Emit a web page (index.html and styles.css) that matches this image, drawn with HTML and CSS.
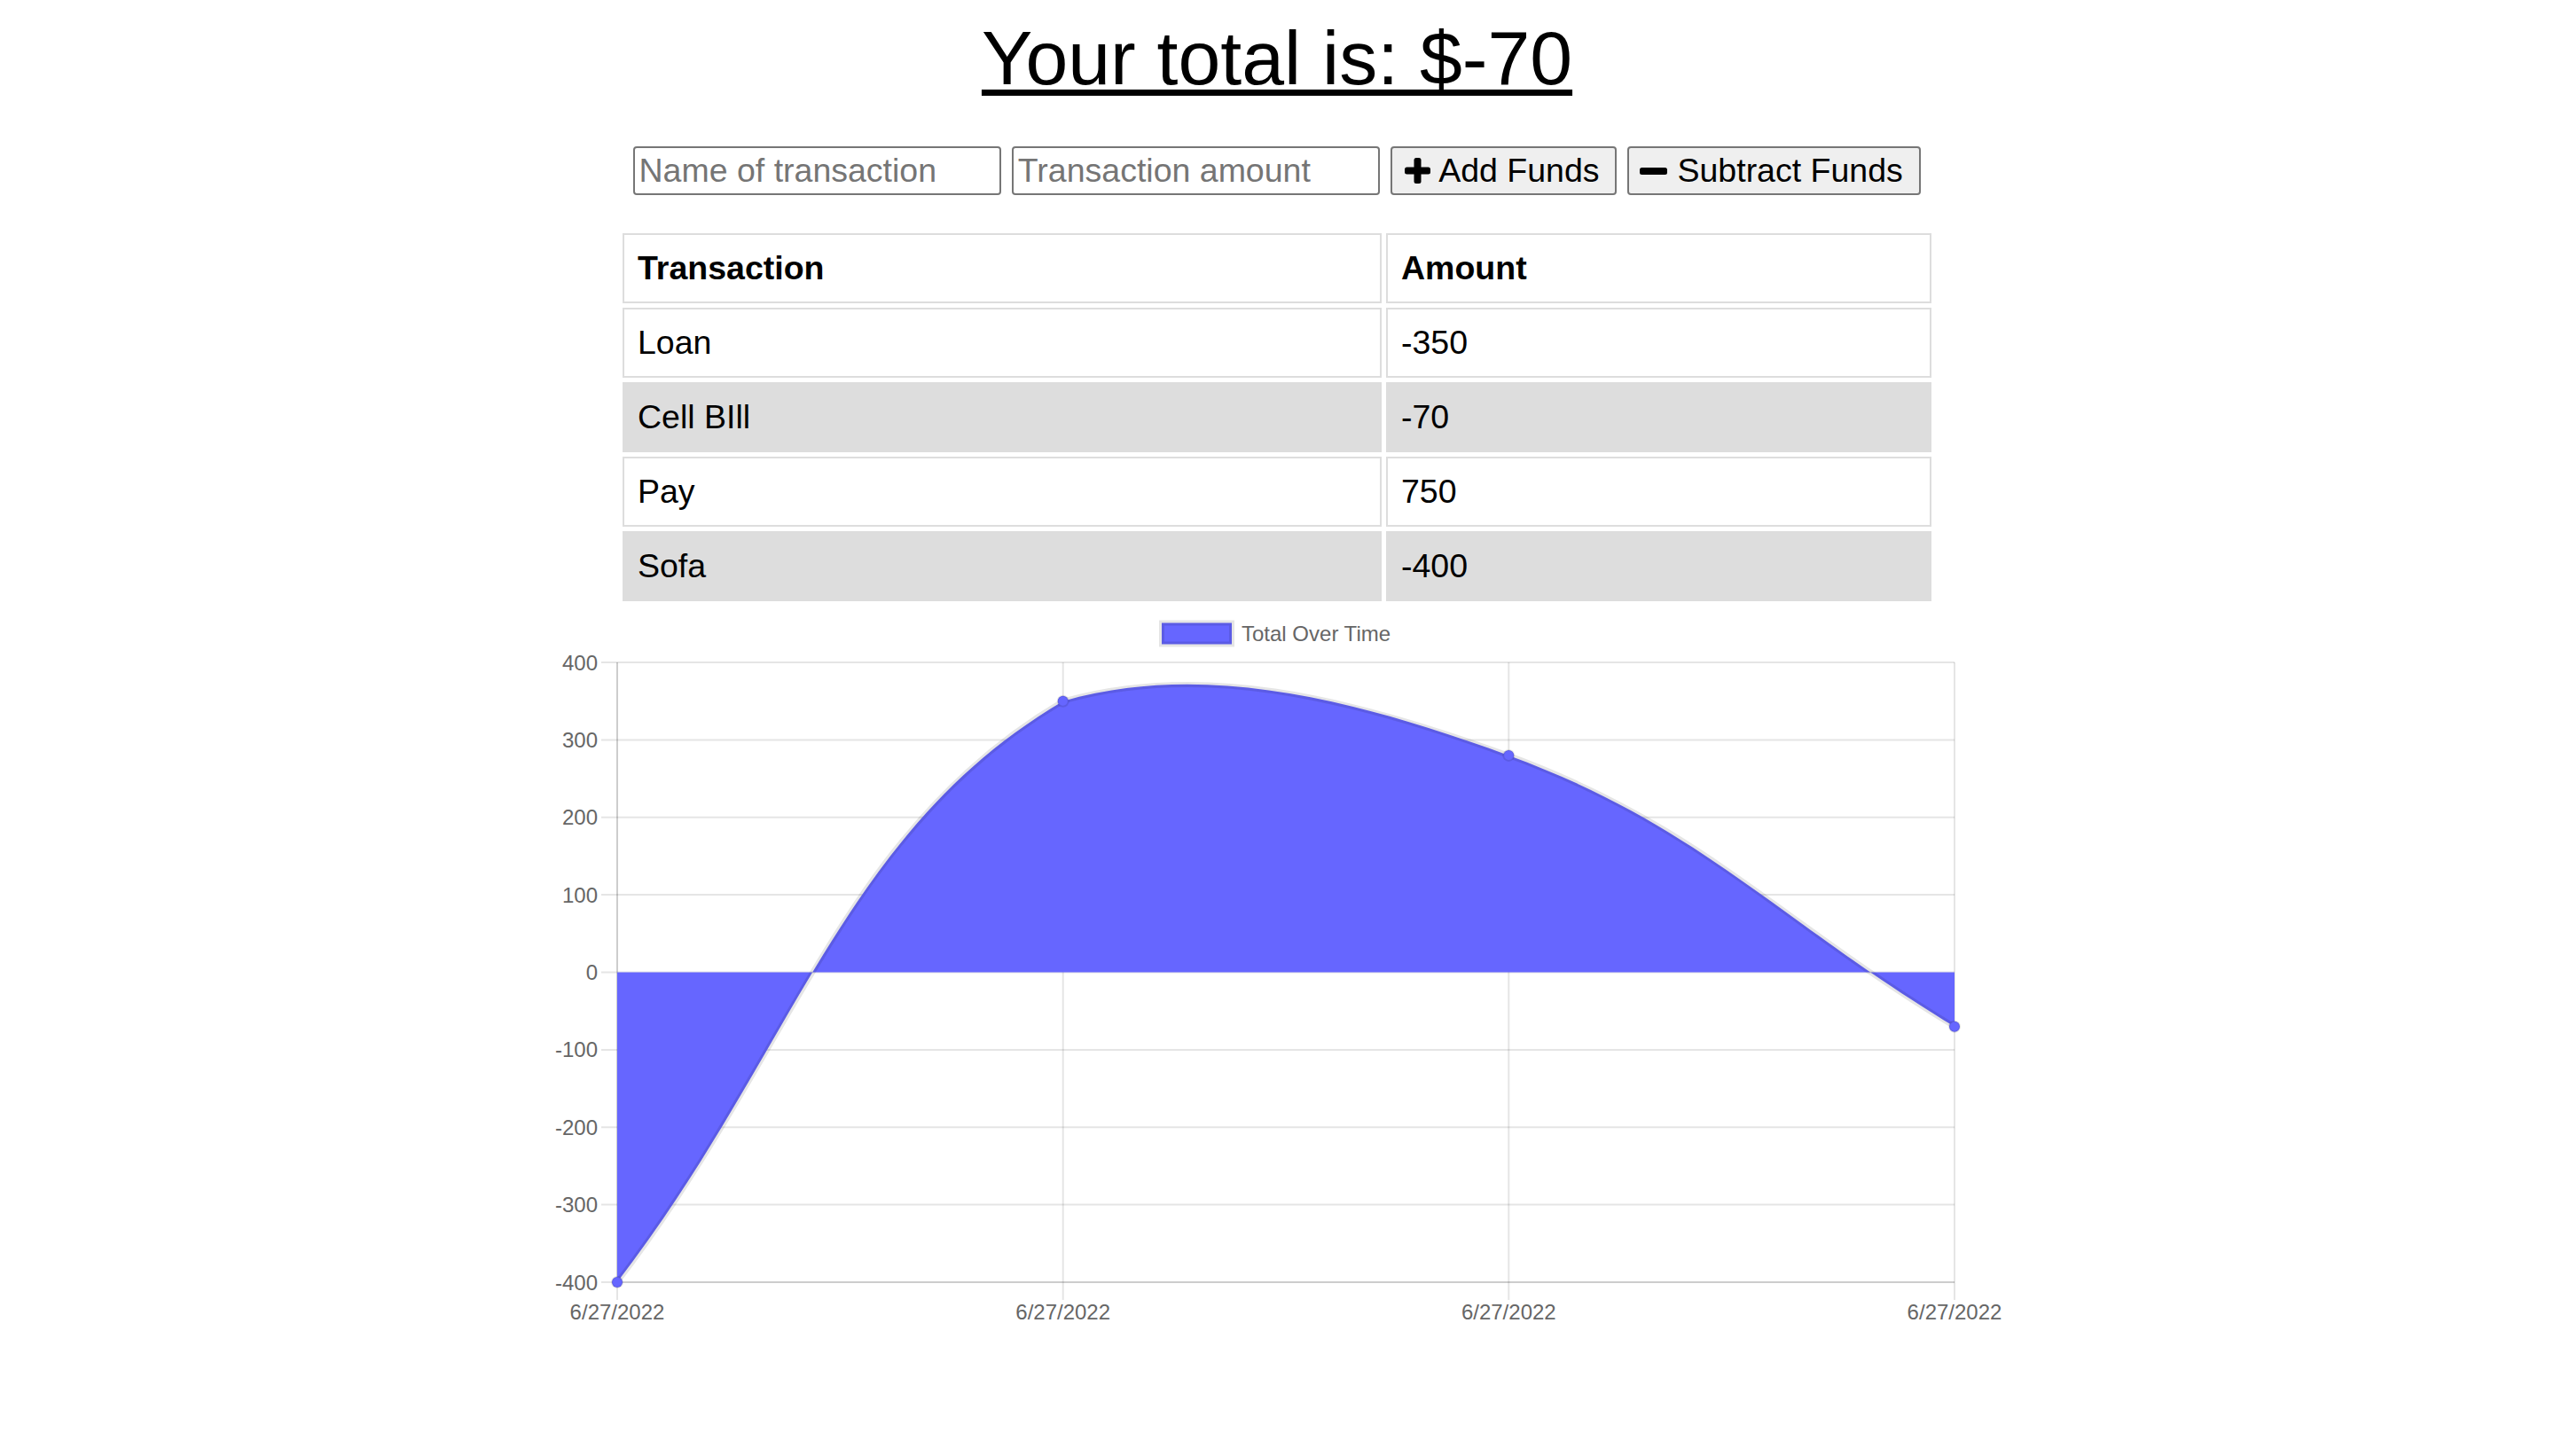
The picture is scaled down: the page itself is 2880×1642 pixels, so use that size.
FILE: index.html
```html
<!DOCTYPE html>
<html lang="en">
<head>
<meta charset="utf-8">
<title>Budget Tracker</title>
<link rel="stylesheet" href="styles.css">
</head>
<body>
<h1 class="total">Your total is: $-70</h1>

<div class="controls">
  <input class="field" type="text" placeholder="Name of transaction">
  <input class="field" type="number" placeholder="Transaction amount">
  <button class="btn btn-add" type="button">
    <svg class="icon-plus" viewBox="0 0 29 29" aria-hidden="true"><rect x="10.5" y="0" width="8" height="29" rx="2.5"/><rect x="0" y="10.5" width="29" height="8" rx="2.5"/></svg>
    <span>Add Funds</span>
  </button>
  <button class="btn btn-sub" type="button">
    <svg class="icon-minus" viewBox="0 0 31 8" aria-hidden="true"><rect x="0" y="0" width="31" height="8" rx="2.5"/></svg>
    <span>Subtract Funds</span>
  </button>
</div>

<table class="ledger">
  <thead>
    <tr><th class="col-name">Transaction</th><th class="col-amount">Amount</th></tr>
  </thead>
  <tbody>
    <tr><td>Loan</td><td>-350</td></tr>
    <tr><td>Cell BIll</td><td>-70</td></tr>
    <tr><td>Pay</td><td>750</td></tr>
    <tr><td>Sofa</td><td>-400</td></tr>
  </tbody>
</table>

<svg class="chart" viewBox="590 683 1700 830" aria-label="Total Over Time">
  <!-- legend -->
  <rect class="legend-box" x="1310" y="702.5" width="79" height="24"/>
  <text class="legend-text" x="1400" y="723">Total Over Time</text>

  <!-- horizontal grid lines -->
  <g class="grid">
    <line x1="678" y1="747" x2="2204" y2="747"/>
    <line x1="678" y1="834.4" x2="2204" y2="834.4"/>
    <line x1="678" y1="921.75" x2="2204" y2="921.75"/>
    <line x1="678" y1="1009.1" x2="2204" y2="1009.1"/>
    <line x1="678" y1="1096.5" x2="2204" y2="1096.5"/>
    <line x1="678" y1="1183.9" x2="2204" y2="1183.9"/>
    <line x1="678" y1="1271.25" x2="2204" y2="1271.25"/>
    <line x1="678" y1="1358.6" x2="2204" y2="1358.6"/>
    <line x1="678" y1="1446" x2="2204" y2="1446"/>
    <!-- vertical grid lines -->
    <line x1="696" y1="747" x2="696" y2="1466"/>
    <line x1="1198.7" y1="747" x2="1198.7" y2="1466"/>
    <line x1="1701.3" y1="747" x2="1701.3" y2="1466"/>
    <line x1="2204" y1="747" x2="2204" y2="1466"/>
  </g>
  <g class="axis">
    <line x1="696" y1="747" x2="696" y2="1446"/>
    <line x1="696" y1="1446" x2="2204" y2="1446"/>
  </g>

  <!-- y labels -->
  <g class="ylabels">
    <text x="674" y="755.5">400</text>
    <text x="674" y="842.9">300</text>
    <text x="674" y="930.2">200</text>
    <text x="674" y="1017.6">100</text>
    <text x="674" y="1105">0</text>
    <text x="674" y="1192.4">-100</text>
    <text x="674" y="1279.7">-200</text>
    <text x="674" y="1367.1">-300</text>
    <text x="674" y="1454.5">-400</text>
  </g>

  <!-- x labels -->
  <g class="xlabels">
    <text x="696" y="1488">6/27/2022</text>
    <text x="1198.7" y="1488">6/27/2022</text>
    <text x="1701.3" y="1488">6/27/2022</text>
    <text x="2204" y="1488">6/27/2022</text>
  </g>

  <!-- area -->
  <path class="area" d="M696,1446 C897,1184 949,938 1198.7,790.7 C1352,747 1515,784 1701.3,851.9 C1917,931 2003,1036 2204,1157.7 L2204,1096.5 L696,1096.5 Z"/>
  <path class="line" d="M696,1446 C897,1184 949,938 1198.7,790.7 C1352,747 1515,784 1701.3,851.9 C1917,931 2003,1036 2204,1157.7"/>

  <!-- points -->
  <g class="points">
    <circle cx="696" cy="1446" r="6"/>
    <circle cx="1198.7" cy="790.7" r="6"/>
    <circle cx="1701.3" cy="851.9" r="6"/>
    <circle cx="2204" cy="1157.7" r="6"/>
  </g>
</svg>
</body>
</html>
```

FILE: styles.css
```css
html, body {
  margin: 0;
  padding: 0;
  background: #ffffff;
}

body {
  font-family: "Liberation Sans", Arial, Helvetica, sans-serif;
  color: #000000;
}

.total {
  margin: 15px 0 0;
  font-size: 86px;
  line-height: 100px;
  font-weight: normal;
  text-align: center;
  text-decoration: underline;
  text-decoration-thickness: 7px;
  text-underline-offset: 6px;
}

.controls {
  display: flex;
  justify-content: center;
  gap: 12.33px;
  margin-top: 50px;
}

.field {
  box-sizing: border-box;
  width: 415px;
  height: 55px;
  margin: 0;
  padding: 0 5px;
  border: 2px solid #767676;
  border-radius: 4px;
  background: #ffffff;
  color: #000000;
  font-family: "Liberation Sans", Arial, sans-serif;
  font-size: 37.5px;
  outline: none;
}

.field::placeholder {
  color: #757575;
  opacity: 1;
}

.field::-webkit-outer-spin-button,
.field::-webkit-inner-spin-button {
  -webkit-appearance: none;
  margin: 0;
}

.field[type="number"] {
  -moz-appearance: textfield;
}

.btn {
  box-sizing: border-box;
  height: 55px;
  margin: 0;
  border: 2px solid #767676;
  border-radius: 4px;
  background: #efefef;
  color: #000000;
  font-family: "Liberation Sans", Arial, sans-serif;
  font-size: 37.5px;
  display: flex;
  align-items: center;
  justify-content: flex-start;
  white-space: nowrap;
}

.btn-add {
  width: 255px;
  padding: 0 0 0 14px;
  gap: 9px;
}

.btn-sub {
  width: 331px;
  padding: 0 0 0 12px;
  gap: 11px;
}

.icon-plus {
  width: 29px;
  height: 29px;
  fill: #000000;
  flex: none;
}

.icon-minus {
  width: 31px;
  height: 8px;
  fill: #000000;
  flex: none;
}

.ledger {
  border-collapse: separate;
  border-spacing: 5px;
  table-layout: fixed;
  width: 1486px;
  margin: 38px auto 0;
  font-size: 37.5px;
}

.ledger th,
.ledger td {
  height: 75px;
  padding: 0 15px;
  border: 2px solid #dddddd;
  text-align: left;
  vertical-align: middle;
  background: #ffffff;
}

.ledger th {
  font-weight: bold;
}

.ledger .col-name {
  width: 822px;
}

.ledger .col-amount {
  width: 581px;
}

.ledger tbody tr:nth-child(even) td {
  background: #dddddd;
}

.chart {
  display: block;
  width: 1700px;
  height: 830px;
  margin: 0 auto;
  font-family: "Liberation Sans", Arial, Helvetica, sans-serif;
}

.legend-box {
  fill: #6666ff;
  stroke: rgba(0, 0, 0, 0.1);
  stroke-width: 6;
}

.legend-text {
  font-size: 24px;
  fill: #666666;
}

.grid line {
  stroke: rgba(0, 0, 0, 0.1);
  stroke-width: 2;
}

.axis line {
  stroke: rgba(0, 0, 0, 0.1);
  stroke-width: 2;
}

.ylabels text {
  font-size: 24px;
  fill: #666666;
  text-anchor: end;
}

.xlabels text {
  font-size: 24px;
  fill: #666666;
  text-anchor: middle;
}

.area {
  fill: #6666ff;
  stroke: none;
}

.line {
  fill: none;
  stroke: rgba(0, 0, 0, 0.1);
  stroke-width: 6;
}

.points circle {
  fill: #6666ff;
  stroke: rgba(0, 0, 0, 0.1);
  stroke-width: 2;
}
```
